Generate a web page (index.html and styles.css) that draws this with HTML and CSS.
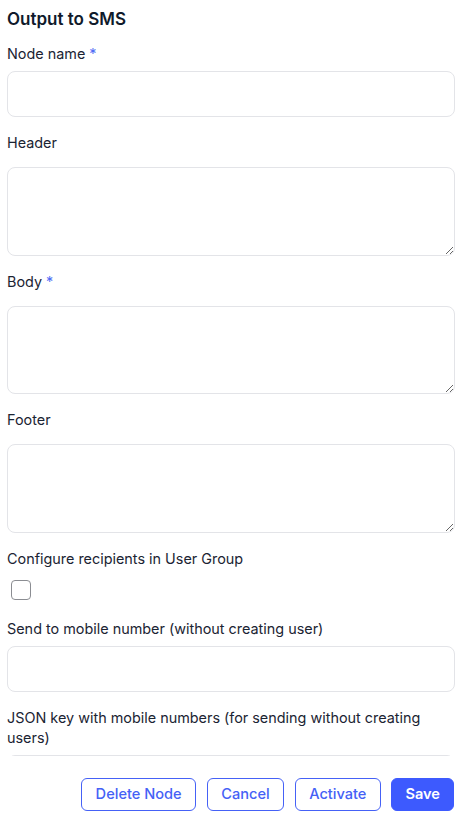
FILE: index.html
```html
<!DOCTYPE html>
<html lang="en">
<head>
<meta charset="utf-8">
<title>Output to SMS</title>
<link rel="stylesheet" href="styles.css">
</head>
<body>
<div class="panel">
  <div class="scroll">
    <h2 class="title">Output to SMS</h2>
    <div class="field">
      <label class="label">Node name <span class="req">*</span></label>
      <input class="input" type="text">
    </div>
    <div class="field">
      <label class="label label-ta">Header</label>
      <textarea class="textarea"></textarea>
    </div>
    <div class="field">
      <label class="label label-ta">Body <span class="req">*</span></label>
      <textarea class="textarea"></textarea>
    </div>
    <div class="field">
      <label class="label label-ta">Footer</label>
      <textarea class="textarea"></textarea>
    </div>
    <div class="field field-check">
      <label class="label">Configure recipients in User Group</label>
      <input class="check" type="checkbox">
    </div>
    <div class="field">
      <label class="label">Send to mobile number (without creating user)</label>
      <input class="input" type="text">
    </div>
    <div class="field">
      <label class="label">JSON key with mobile numbers (for sending without creating users)</label>
      <input class="input" type="text">
    </div>
  </div>
  <div class="footer">
    <button class="btn btn-outline">Delete Node</button>
    <button class="btn btn-outline">Cancel</button>
    <button class="btn btn-outline">Activate</button>
    <button class="btn btn-primary">Save</button>
  </div>
</div>
</body>
</html>
```

FILE: styles.css
```css
* { box-sizing: border-box; }
html, body {
  margin: 0;
  padding: 0;
  background: #ffffff;
}
body {
  font-family: Inter, "Noto Sans", sans-serif;
  color: #1b2433;
}
.panel {
  width: 470px;
  height: 825px;
  display: flex;
  flex-direction: column;
}
.scroll {
  height: 756px;
  overflow: hidden;
  padding: 7px 15px 0 7px;
  flex: none;
}
.title {
  margin: 0 0 13px;
  font-size: 17px;
  line-height: 24px;
  font-weight: 600;
  color: #0f1a2b;
}
.field {
  margin-bottom: 16px;
}
.label {
  display: block;
  font-size: 14.4px;
  line-height: 20px;
  font-weight: 400;
  margin-bottom: 7px;
  color: #1b2433;
}
.label-ta {
  margin-bottom: 14px;
}
.req {
  color: #4f6bf5;
}
.input {
  display: block;
  width: 100%;
  height: 46px;
  border: 1px solid #e3e4e8;
  border-radius: 8px;
  background: #fff;
  font-family: inherit;
  font-size: 14px;
  padding: 0 12px;
  margin: 0;
  outline: none;
}
.textarea {
  display: block;
  width: 100%;
  height: 88.6px;
  border: 1px solid #e3e4e8;
  border-radius: 8px;
  background: #fff;
  font-family: inherit;
  font-size: 14px;
  padding: 8px 12px;
  margin: 0;
  resize: vertical;
  outline: none;
}
.field-check {
  margin-bottom: 19px;
}
.field-check .label {
  margin-bottom: 11px;
}
.check {
  appearance: none;
  -webkit-appearance: none;
  display: block;
  width: 20px;
  height: 20px;
  margin: 0 0 0 4px;
  border: 1.5px solid #8b8d92;
  border-radius: 4px;
  background: #fff;
}
.footer {
  flex: 1;
  display: flex;
  justify-content: flex-end;
  align-items: flex-start;
  gap: 10.5px;
  padding: 22px 16px 0 0;
}
.btn {
  height: 32.5px;
  padding: 0 13.5px;
  border-radius: 6px;
  font-family: inherit;
  font-size: 14.6px;
  font-weight: 500;
  line-height: 20px;
  cursor: pointer;
}
.btn-outline {
  background: #fff;
  border: 1px solid #4561f6;
  color: #4561f6;
}
.btn-primary {
  background: #3d5afe;
  border: 1px solid #3d5afe;
  color: #fff;
  font-weight: 600;
  padding: 0 13px;
}
```
